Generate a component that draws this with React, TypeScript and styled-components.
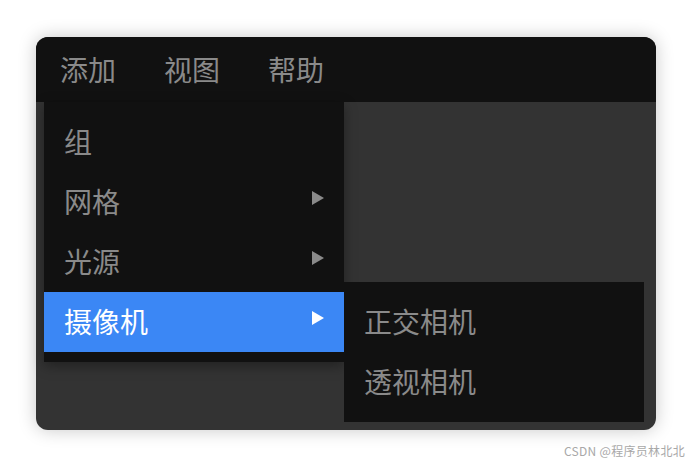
import React from "react";
import styled, { createGlobalStyle } from "styled-components";

const Global = createGlobalStyle`
  html, body { margin: 0; padding: 0; background: #ffffff; }
  body { width: 692px; height: 466px; overflow: hidden; position: relative;
    font-family: "Noto Sans CJK SC", "Noto Sans", sans-serif; }
`;

const Page = styled.div`
  padding: 37px 0 0 36px;
`;

const Card = styled.div`
  position: relative;
  width: 620px;
  height: 393px;
  border-radius: 12px;
  background: #333333;
  box-shadow: 0 0 18px rgba(0, 0, 0, 0.22);
  display: flex;
  flex-direction: column;
`;

const MenuBar = styled.div`
  display: flex;
  height: 65px;
  background: #111111;
  border-radius: 12px 12px 0 0;
  flex-shrink: 0;
`;

const BarItem = styled.div`
  padding: 0 24px 2px;
  display: flex;
  align-items: center;
  font-size: 28px;
  color: #8a8a8a;
  line-height: 1;
`;

const Body = styled.div`
  position: relative;
  flex: 1;
  border-radius: 0 0 12px 12px;
`;

const Menu = styled.div<{ $left: number; $top: number }>`
  position: absolute;
  left: ${(p) => p.$left}px;
  top: ${(p) => p.$top}px;
  width: 300px;
  padding: 10px 0;
  background: #111111;
  box-shadow: 0 4px 12px rgba(0, 0, 0, 0.35);
  display: flex;
  flex-direction: column;
  z-index: 2;
`;

const Item = styled.div<{ $active?: boolean }>`
  position: relative;
  height: 60px;
  padding: 0 20px 0 20px;
  display: flex;
  align-items: center;
  justify-content: space-between;
  font-size: 28px;
  line-height: 1;
  color: ${(p) => (p.$active ? "#ffffff" : "#8a8a8a")};
  background: ${(p) => (p.$active ? "#3b87f5" : "transparent")};
`;

const Label = styled.span`
  display: block;
  margin-top: -2px;
`;

const Arrow = styled.span<{ $active?: boolean }>`
  width: 0;
  height: 0;
  margin-top: -8px;
  border-top: 7px solid transparent;
  border-bottom: 7px solid transparent;
  border-left: 12px solid ${(p) => (p.$active ? "#ffffff" : "#8a8a8a")};
`;

const SubMenu = styled.div`
  position: absolute;
  left: 100%;
  top: -10px;
  width: 300px;
  padding: 10px 0;
  background: #111111;
  display: flex;
  flex-direction: column;
`;

const Watermark = styled.div`
  position: absolute;
  right: 7px;
  bottom: 7px;
  font-size: 12px;
  color: #a8a8a8;
  font-family: "Noto Sans CJK SC", "Noto Sans", sans-serif;
  letter-spacing: 0.3px;
`;

export default function App() {
  const items = [
    { label: "组", sub: false },
    { label: "网格", sub: true },
    { label: "光源", sub: true },
    { label: "摄像机", sub: true, active: true },
  ];
  return (
    <>
      <Global />
      <Page>
        <Card>
          <MenuBar>
            <BarItem>添加</BarItem>
            <BarItem>视图</BarItem>
            <BarItem>帮助</BarItem>
          </MenuBar>
          <Body>
            <Menu $left={8} $top={0}>
              {items.map((it) => (
                <Item key={it.label} $active={it.active}>
                  <Label>{it.label}</Label>
                  {it.sub && <Arrow $active={it.active} />}
                  {it.active && (
                    <SubMenu>
                      <Item>
                        <Label>正交相机</Label>
                      </Item>
                      <Item>
                        <Label>透视相机</Label>
                      </Item>
                    </SubMenu>
                  )}
                </Item>
              ))}
            </Menu>
          </Body>
        </Card>
      </Page>
      <Watermark>CSDN @程序员林北北</Watermark>
    </>
  );
}
